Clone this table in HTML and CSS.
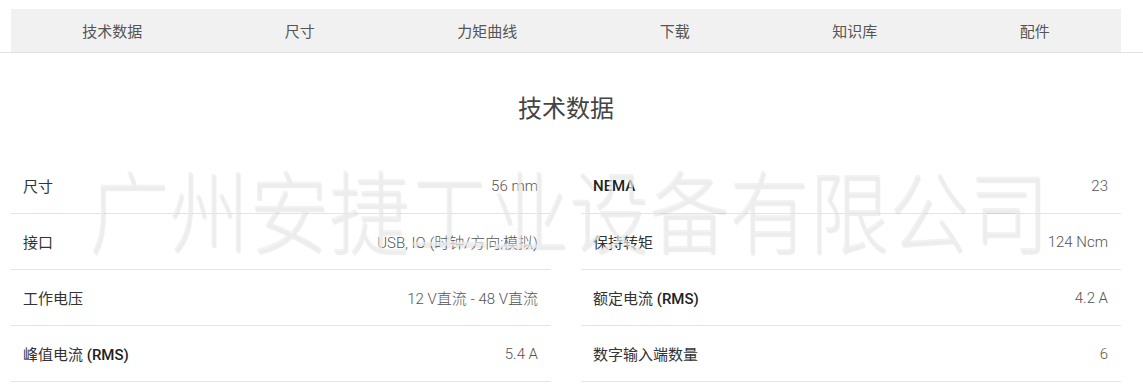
FILE: index.html
```html
<!DOCTYPE html>
<html lang="zh-CN">
<head>
<meta charset="utf-8">
<title>技术数据</title>
<link rel="stylesheet" href="styles.css">
</head>
<body>
<div class="page">
  <header class="header">
    <nav class="tabs">
      <a class="tab">技术数据</a>
      <a class="tab">尺寸</a>
      <a class="tab">力矩曲线</a>
      <a class="tab">下载</a>
      <a class="tab">知识库</a>
      <a class="tab">配件</a>
    </nav>
  </header>
  <main class="main">
    <h2 class="title">技术数据</h2>
    <div class="specs">
      <div class="row"><span class="label">尺寸</span><span class="value">56 mm</span></div>
      <div class="row"><span class="label"><b class="latin">NEMA</b></span><span class="value">23</span></div>
      <div class="row"><span class="label">接口</span><span class="value">USB, IO (时钟/方向;模拟)</span></div>
      <div class="row"><span class="label">保持转矩</span><span class="value">124 Ncm</span></div>
      <div class="row"><span class="label">工作电压</span><span class="value">12 V直流 - 48 V直流</span></div>
      <div class="row"><span class="label">额定电流 <b class="latin">(RMS)</b></span><span class="value">4.2 A</span></div>
      <div class="row"><span class="label">峰值电流 <b class="latin">(RMS)</b></span><span class="value">5.4 A</span></div>
      <div class="row"><span class="label">数字输入端数量</span><span class="value">6</span></div>
    </div>
  </main>
  <div class="watermark" aria-hidden="true">广州安捷工业设备有限公司</div>
</div>
</body>
</html>
```

FILE: styles.css
```css
html, body {
  margin: 0;
  padding: 0;
  background: #fff;
}
.page {
  position: relative;
  width: 1143px;
  height: 385px;
  overflow: hidden;
  font-family: Roboto, "Noto Sans CJK SC", sans-serif;
  color: #333;
}
.header {
  padding: 9px 22px 0 11px;
  border-bottom: 1px solid #e2e2e2;
}
.tabs {
  display: flex;
  justify-content: space-around;
  align-items: center;
  height: 43px;
  background: #f1f1f1;
}
.tab {
  font-family: "Noto Sans CJK SC", sans-serif;
  font-size: 15px;
  color: #555;
  line-height: 20px;
}
.main {
  padding: 0 22px 0 11px;
}
.title {
  margin: 36px 0 33px;
  text-align: center;
  font-family: "Noto Sans CJK SC", sans-serif;
  font-weight: 400;
  font-size: 24px;
  line-height: 36px;
  color: #444;
}
.specs {
  display: grid;
  grid-template-columns: 1fr 1fr;
  column-gap: 30px;
}
.row {
  display: flex;
  justify-content: space-between;
  align-items: center;
  height: 55px;
  padding: 0 13px 0 12px;
  border-bottom: 1px solid #e4e4e4;
  font-size: 15px;
}
.label {
  font-family: Roboto, "Noto Sans CJK SC", sans-serif;
  color: #333;
}
.latin {
  font-weight: 500;
  color: #222;
}
.value {
  font-family: Roboto, "Noto Sans CJK SC", sans-serif;
  font-weight: 300;
  color: #555;
}
.watermark {
  position: absolute;
  left: 89px;
  top: 158px;
  font-family: "Noto Sans CJK SC", sans-serif;
  font-weight: 300;
  font-size: 80px;
  line-height: 1.1;
  white-space: nowrap;
  color: rgba(236, 236, 236, 0.7);
  text-shadow: 1px 1px 1px rgba(0, 0, 0, 0.07);
  transform: scaleY(1.12);
  transform-origin: left top;
  pointer-events: none;
}
```
